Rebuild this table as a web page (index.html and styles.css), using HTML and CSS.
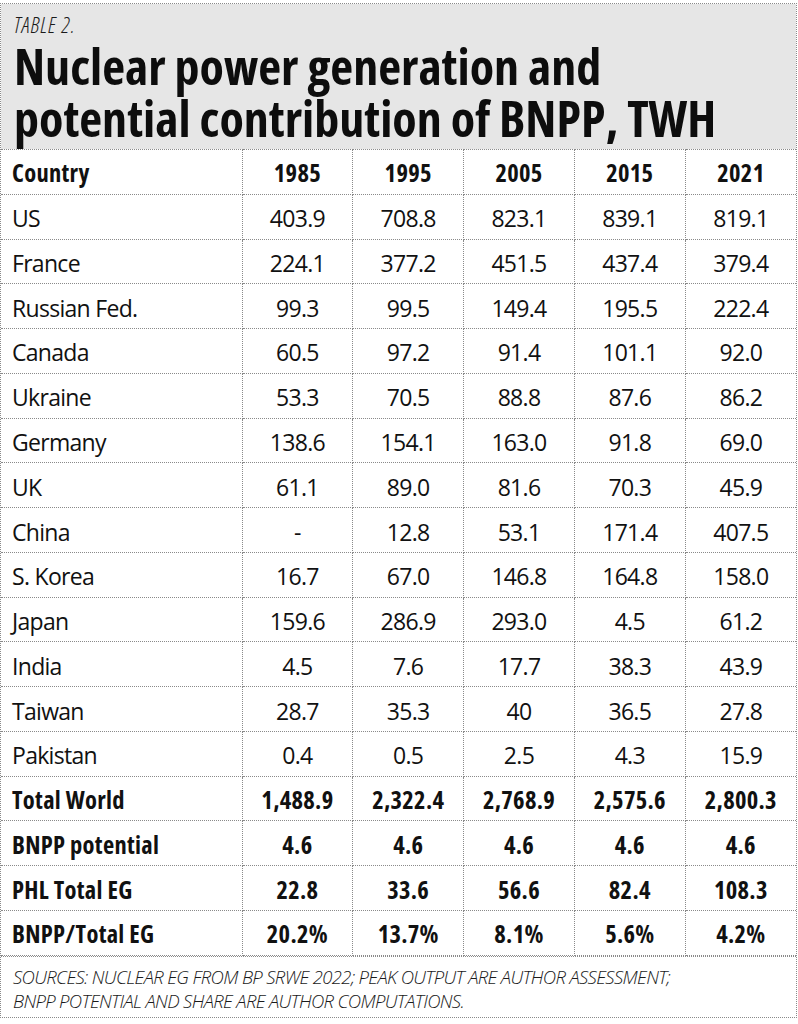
FILE: index.html
```html
<!DOCTYPE html>
<html lang="en">
<head>
<meta charset="utf-8">
<title>Table 2 – Nuclear power generation</title>
<link rel="stylesheet" href="styles.css">
</head>
<body>
<div class="frame">
  <header class="head">
    <div class="label">TABLE 2.</div>
    <h1 class="title">Nuclear power generation and<br>potential contribution of BNPP, TWH</h1>
  </header>
  <table class="data">
    <colgroup>
      <col class="c-name"><col class="c-num"><col class="c-num"><col class="c-num"><col class="c-num"><col class="c-num">
    </colgroup>
    <thead>
      <tr class="bold"><th>Country</th><th>1985</th><th>1995</th><th>2005</th><th>2015</th><th>2021</th></tr>
    </thead>
    <tbody>
      <tr><td>US</td><td>403.9</td><td>708.8</td><td>823.1</td><td>839.1</td><td>819.1</td></tr>
      <tr><td>France</td><td>224.1</td><td>377.2</td><td>451.5</td><td>437.4</td><td>379.4</td></tr>
      <tr><td>Russian Fed.</td><td>99.3</td><td>99.5</td><td>149.4</td><td>195.5</td><td>222.4</td></tr>
      <tr><td>Canada</td><td>60.5</td><td>97.2</td><td>91.4</td><td>101.1</td><td>92.0</td></tr>
      <tr><td>Ukraine</td><td>53.3</td><td>70.5</td><td>88.8</td><td>87.6</td><td>86.2</td></tr>
      <tr><td>Germany</td><td>138.6</td><td>154.1</td><td>163.0</td><td>91.8</td><td>69.0</td></tr>
      <tr><td>UK</td><td>61.1</td><td>89.0</td><td>81.6</td><td>70.3</td><td>45.9</td></tr>
      <tr><td>China</td><td>-</td><td>12.8</td><td>53.1</td><td>171.4</td><td>407.5</td></tr>
      <tr><td>S. Korea</td><td>16.7</td><td>67.0</td><td>146.8</td><td>164.8</td><td>158.0</td></tr>
      <tr><td>Japan</td><td>159.6</td><td>286.9</td><td>293.0</td><td>4.5</td><td>61.2</td></tr>
      <tr><td>India</td><td>4.5</td><td>7.6</td><td>17.7</td><td>38.3</td><td>43.9</td></tr>
      <tr><td>Taiwan</td><td>28.7</td><td>35.3</td><td>40</td><td>36.5</td><td>27.8</td></tr>
      <tr><td>Pakistan</td><td>0.4</td><td>0.5</td><td>2.5</td><td>4.3</td><td>15.9</td></tr>
      <tr class="bold"><td>Total World</td><td>1,488.9</td><td>2,322.4</td><td>2,768.9</td><td>2,575.6</td><td>2,800.3</td></tr>
      <tr class="bold"><td>BNPP potential</td><td>4.6</td><td>4.6</td><td>4.6</td><td>4.6</td><td>4.6</td></tr>
      <tr class="bold"><td>PHL Total EG</td><td>22.8</td><td>33.6</td><td>56.6</td><td>82.4</td><td>108.3</td></tr>
      <tr class="bold"><td>BNPP/Total EG</td><td>20.2%</td><td>13.7%</td><td>8.1%</td><td>5.6%</td><td>4.2%</td></tr>
    </tbody>
  </table>
  <footer class="source">SOURCES: NUCLEAR EG FROM BP SRWE 2022; PEAK OUTPUT ARE AUTHOR ASSESSMENT;<br>BNPP POTENTIAL AND SHARE ARE AUTHOR COMPUTATIONS.</footer>
</div>
</body>
</html>
```
FILE: styles.css
```css
html, body {
  background: #ffffff;
}
body {
  margin: 3px 0 0 0;
  color: #111111;
  font-family: "Open Sans", "Liberation Sans", sans-serif;
}
.frame {
  box-sizing: border-box;
  width: 797px;
  border: 1px dotted #8a8a8a;
}
.head {
  background: #e6e6e6;
  padding: 8px 0 0 13px;
  height: 145px;
  box-sizing: border-box;
}
.label {
  font-style: italic;
  font-weight: 300;
  font-stretch: 75%;
  font-size: 22px;
  letter-spacing: 1px;
  line-height: 24px;
  color: #1a1a1a;
}
.title {
  margin: 4px 0 0 0;
  font-weight: 700;
  font-stretch: 75%;
  font-size: 50px;
  line-height: 52px;
  letter-spacing: 0;
  color: #0d0d0d;
}
.data {
  width: 100%;
  border-collapse: collapse;
  table-layout: fixed;
}
.c-name { width: 241px; }
.data th, .data td {
  border: 1px dotted #8a8a8a;
  height: 44.78px;
  padding: 3px 0 0 0;
  box-sizing: border-box;
  font-size: 23px;
  font-stretch: 100%;
  font-weight: 400;
  letter-spacing: -0.7px;
  text-align: center;
  vertical-align: middle;
  line-height: 28px;
  white-space: nowrap;
}
.data tr > :first-child {
  text-align: left;
  padding-left: 11px;
  border-left: none;
}
.data tr > :last-child {
  border-right: none;
}
.data thead th {
  border-top: 1px dotted #8a8a8a;
}
.data .bold th, .data .bold td {
  font-weight: 700;
  font-stretch: 75%;
  font-size: 24.5px;
  letter-spacing: 0.3px;
}
.source {
  border-top: 1px dotted #8a8a8a;
  padding: 8px 0 0 12px;
  height: 61px;
  box-sizing: border-box;
  font-style: italic;
  font-weight: 300;
  font-stretch: 100%;
  font-size: 18.5px;
  letter-spacing: -0.65px;
  line-height: 24px;
  color: #1a1a1a;
}
```
